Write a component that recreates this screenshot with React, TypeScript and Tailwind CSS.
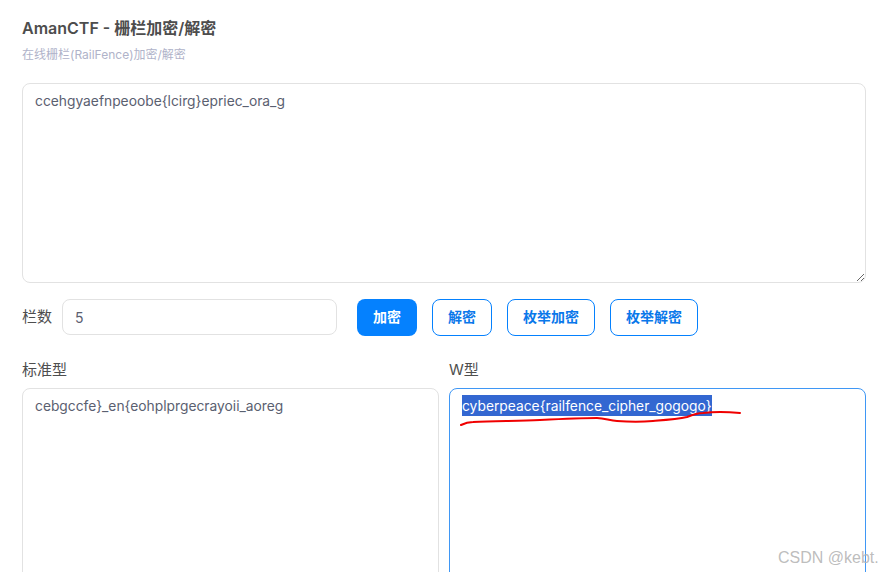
import React from "react";

const Button = ({ label, primary }: { label: string; primary?: boolean }) => (
  <button
    className={
      primary
        ? "h-[37px] w-[60px] rounded-[8px] bg-[#0581fe] pb-[2px] text-[14px] font-semibold text-white"
        : "h-[37px] rounded-[8px] border border-[#0581fe] bg-white px-[15px] pb-[2px] text-[14px] font-semibold text-[#0a78ea]"
    }
  >
    {label}
  </button>
);

export default function App() {
  return (
    <div className="relative h-[572px] w-[881px] overflow-hidden bg-white pl-[22px] pr-[15px] pt-[18px] font-['Inter','Noto_Sans_CJK_SC',sans-serif] text-[#4e4e4e]">
      <h1 className="text-[16px] font-semibold leading-[20px] text-[#4d4d4d]">AmanCTF - 栅栏加密/解密</h1>
      <p className="mt-[7px] text-[12px] leading-[20px] text-[#b0b3c9]">在线栅栏(RailFence)加密/解密</p>

      <textarea
        readOnly
        value="ccehgyaefnpeoobe{lcirg}epriec_ora_g"
        className="mt-[18px] block h-[200px] w-[844px] rounded-[8px] border border-[#e2e2e2] px-3 py-[7px] text-[13.8px] leading-[21px] text-[#5a6070] outline-none"
      />

      <div className="mt-4 flex items-start">
        <span className="w-10 text-[15px] leading-[36px]">栏数</span>
        <input
          readOnly
          value="5"
          className="h-[36px] w-[275px] rounded-[8px] border border-[#e2e2e2] px-3 text-[14px] text-[#5a6070] outline-none"
        />
        <div className="ml-5 flex gap-[15px]">
          <Button label="加密" primary />
          <Button label="解密" />
          <Button label="枚举加密" />
          <Button label="枚举解密" />
        </div>
      </div>

      <div className="mt-[24px] flex gap-[10px]">
        <div className="w-[417px]">
          <div className="mb-2 text-[15px] leading-[20px]">标准型</div>
          <div className="h-[200px] rounded-[8px] border border-[#e2e2e2] px-3 py-[7px] text-[13.8px] leading-[21px] text-[#5a6070]">
            {"cebgccfe}_en{eohplprgecrayoii_aoreg"}
          </div>
        </div>
        <div className="w-[417px]">
          <div className="mb-2 text-[15px] leading-[20px]">W型</div>
          <div className="h-[200px] rounded-[8px] border border-[#3f97f5] px-3 py-[6px] text-[13.8px] leading-[21px] text-[#5a6070]">
            <span className="inline-block bg-[#3367d1] pt-[1px] leading-[20px] text-white">{"cyberpeace{railfence_cipher_gogogo}"}</span>
          </div>
        </div>
      </div>

      {/* hand-drawn underline */}
      <svg className="pointer-events-none absolute left-0 top-0" width="881" height="572" fill="none">
        <path
          d="M461 425 C465 423 469 422 473 422 C495 421 518 421 540 420 C560 419 580 418 597 418 C605 418 610 421 617 421 C630 422 642 422 653 421 C665 420 678 419 687 417 C692 415 697 413 703 413 C712 412 728 412 740 413"
          stroke="#f00000"
          strokeWidth="2"
          strokeLinecap="round"
        />
      </svg>

      <span className="absolute left-[778px] top-[549px] font-['Liberation_Sans',sans-serif] text-[16px] leading-[18px] text-[#b5b5b5]/90">
        CSDN @kebt.
      </span>
    </div>
  );
}
